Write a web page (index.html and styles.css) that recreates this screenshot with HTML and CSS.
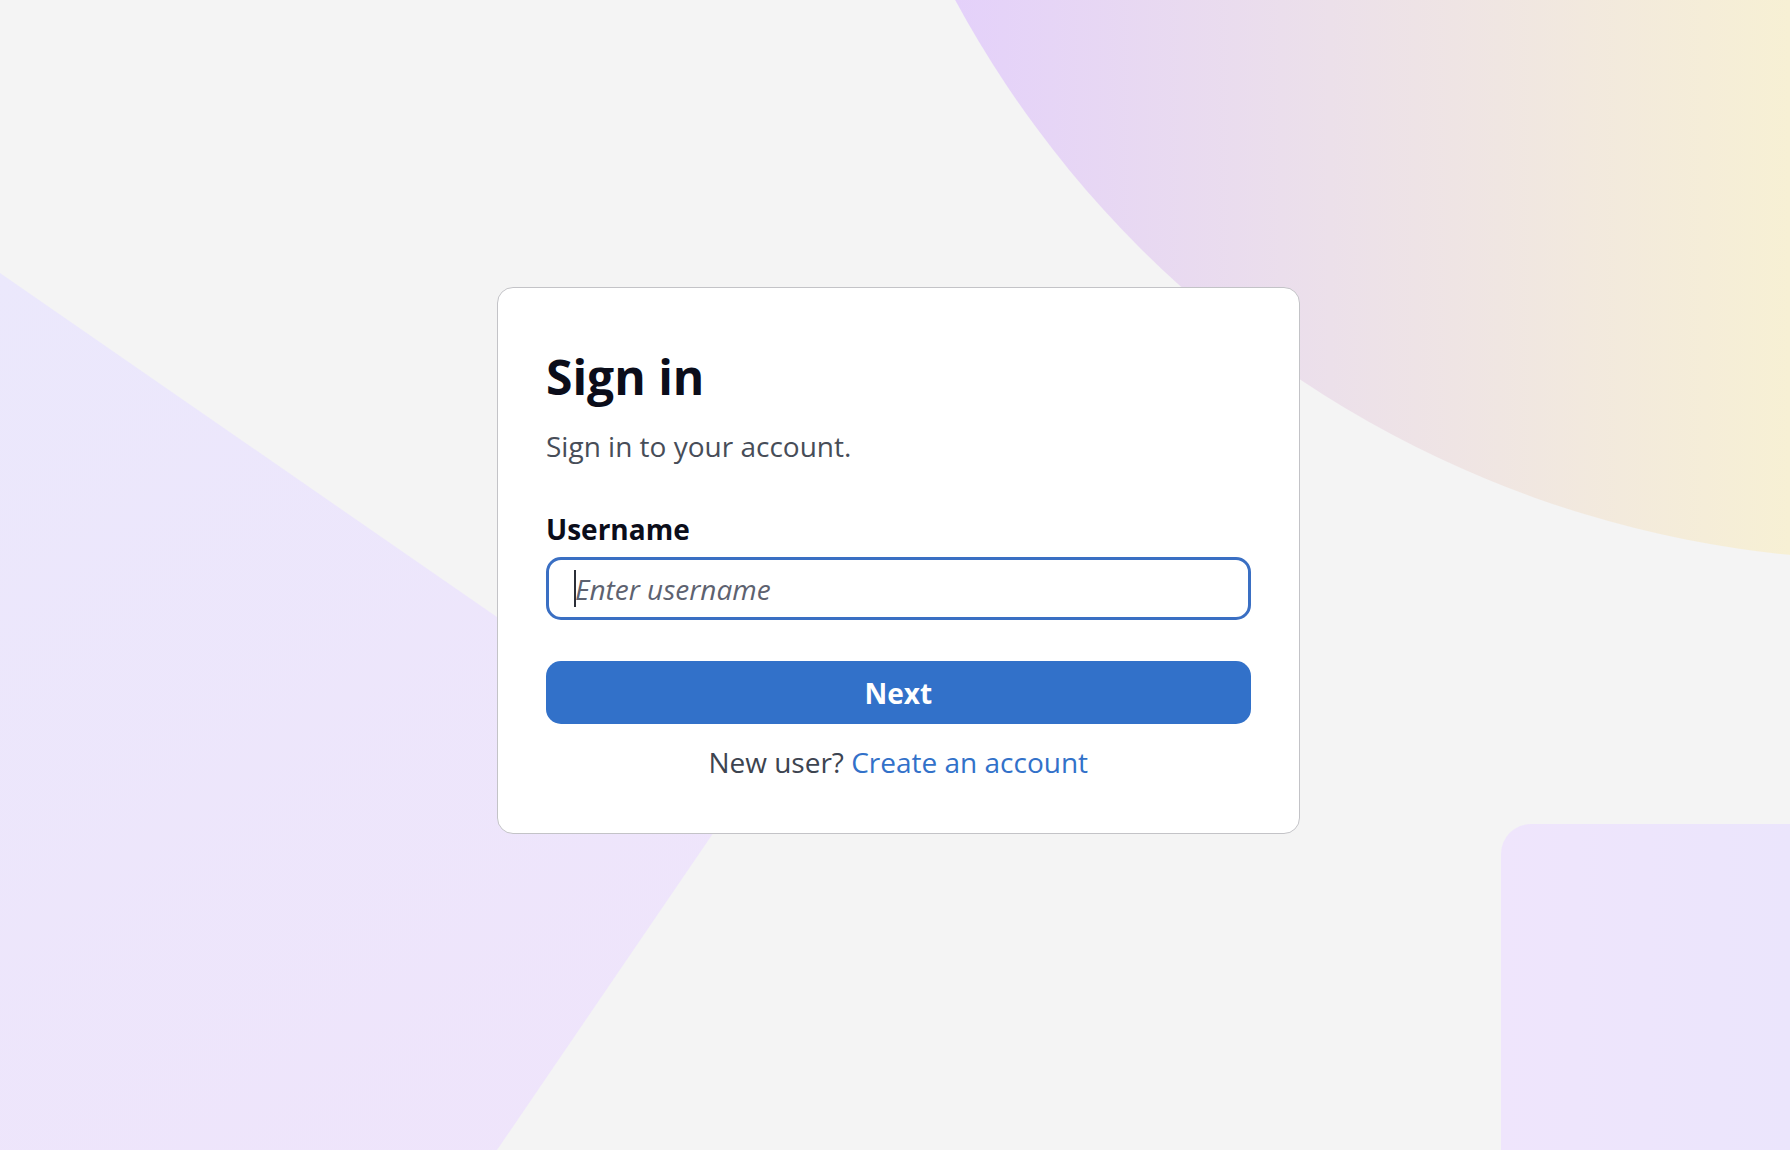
FILE: index.html
```html
<!DOCTYPE html>
<html lang="en">
<head>
<meta charset="utf-8">
<title>Sign in</title>
<link rel="stylesheet" href="styles.css">
</head>
<body>
<svg class="backdrop" viewBox="0 0 1790 1150" preserveAspectRatio="none" aria-hidden="true">
  <defs>
    <linearGradient id="gCircle" gradientUnits="userSpaceOnUse" x1="955" y1="0" x2="1790" y2="0">
      <stop offset="0" stop-color="#e4d1fa"/>
      <stop offset="0.45" stop-color="#ece0ea"/>
      <stop offset="1" stop-color="#f7f0d4"/>
    </linearGradient>
    <linearGradient id="gLeft" gradientUnits="userSpaceOnUse" x1="0" y1="273" x2="650" y2="1150">
      <stop offset="0" stop-color="#ebe8fc"/>
      <stop offset="1" stop-color="#efe4fb"/>
    </linearGradient>
    <linearGradient id="gRect" gradientUnits="userSpaceOnUse" x1="1501" y1="0" x2="1790" y2="0">
      <stop offset="0" stop-color="#efe5fc"/>
      <stop offset="1" stop-color="#ebe5fc"/>
    </linearGradient>
  </defs>
  <circle cx="1894" cy="-507" r="1067" fill="url(#gCircle)"/>
  <polygon points="0,273 744,788 497,1150 0,1150" fill="url(#gLeft)"/>
  <rect x="1501" y="824" width="420" height="420" rx="30" fill="url(#gRect)"/>
</svg>

<main class="page">
  <section class="card">
    <h1 class="card-title">Sign in</h1>
    <p class="card-subtitle">Sign in to your account.</p>
    <form class="form" onsubmit="return false">
      <label class="field-label" for="username">Username</label>
      <div class="field">
        <input class="field-input" id="username" type="text" placeholder="Enter username">
        <span class="caret"></span>
      </div>
      <button class="btn-primary" type="submit">Next</button>
    </form>
    <p class="signup">New user? <a class="link" href="#">Create an account</a></p>
  </section>
</main>
</body>
</html>
```

FILE: styles.css
```css
html, body {
  margin: 0;
  padding: 0;
}

body {
  background: #f4f4f4;
  font-family: "Open Sans", "Noto Sans", "Liberation Sans", sans-serif;
  min-height: 100vh;
  overflow: hidden;
}

.backdrop {
  position: fixed;
  inset: 0;
  width: 100%;
  height: 100%;
  z-index: 0;
}

.page {
  position: relative;
  z-index: 1;
  box-sizing: border-box;
  min-height: 100vh;
  padding: 287px 0 0 497px;
}

.card {
  box-sizing: border-box;
  width: 803px;
  background: #ffffff;
  border: 1.5px solid #c3c3c7;
  border-radius: 16px;
  padding: 59.5px 48.5px 49.5px 48px;
}

.card-title {
  margin: 0;
  font-size: 48px;
  line-height: 1.2;
  font-weight: 700;
  color: #0b0d1a;
}

.card-subtitle {
  margin: 20px 0 0;
  font-size: 28px;
  line-height: 42px;
  color: #474d58;
}

.form {
  display: flex;
  flex-direction: column;
  margin-top: 41px;
}

.field-label {
  font-size: 28px;
  line-height: 42px;
  font-weight: 700;
  color: #0b0d1a;
}

.field {
  position: relative;
  margin-top: 7px;
}

.field-input {
  display: block;
  box-sizing: border-box;
  width: 100%;
  height: 63px;
  margin: 0;
  padding: 0 26px;
  border: 3px solid #3a6fc3;
  border-radius: 15px;
  background: #ffffff;
  font-family: inherit;
  font-size: 28px;
  color: #1f2330;
  outline: none;
}

.field-input::placeholder {
  font-style: italic;
  color: #5d6270;
  opacity: 1;
}

.caret {
  position: absolute;
  left: 28px;
  top: 13px;
  width: 2px;
  height: 37px;
  background: #2b2f38;
}

.btn-primary {
  display: block;
  box-sizing: border-box;
  width: 100%;
  height: 63px;
  margin-top: 41px;
  border: 0;
  border-radius: 15px;
  background: #3271c9;
  color: #ffffff;
  font-family: inherit;
  font-size: 28px;
  font-weight: 700;
  cursor: pointer;
}

.signup {
  margin: 17px 0 0;
  text-align: center;
  font-size: 28px;
  line-height: 42px;
  color: #3d4450;
}

.link {
  color: #3271c9;
  text-decoration: none;
}
```
